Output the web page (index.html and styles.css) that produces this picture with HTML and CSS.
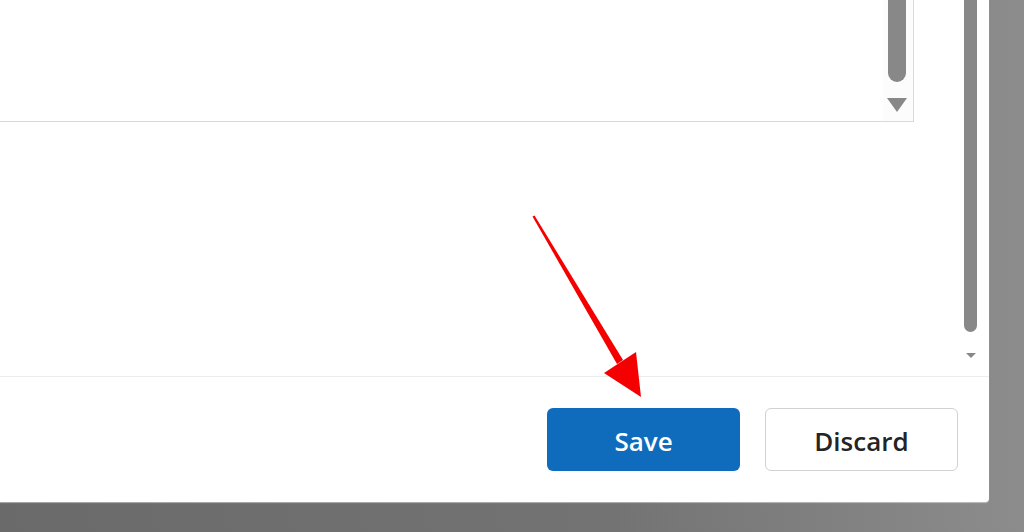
FILE: index.html
```html
<!DOCTYPE html>
<html>
<head>
<meta charset="utf-8">
<link rel="stylesheet" href="styles.css">
</head>
<body>
<div class="dialog">
  <div class="body">
    <div class="main">
      <div class="editor">
        <div class="editor-scroll">
          <div class="inner-thumb"></div>
          <div class="inner-arrow"></div>
        </div>
      </div>
    </div>
    <div class="outer-scroll">
      <div class="outer-thumb"></div>
      <div class="outer-arrow"></div>
    </div>
  </div>
  <div class="footer">
    <button class="btn primary">Save</button>
    <button class="btn secondary">Discard</button>
  </div>
</div>
<svg class="annot" width="1024" height="532" viewBox="0 0 1024 532">
  <polygon fill="#f40000" points="532.5,216.5 534.5,215.5 623,360 617,364"/>
  <polygon fill="#f40000" points="604,373 636,352 641,397"/>
</svg>
</body>
</html>
```
FILE: styles.css
```css
html, body {
  margin: 0;
  padding: 0;
}
body {
  width: 1024px;
  height: 532px;
  overflow: hidden;
  position: relative;
  background: linear-gradient(90deg, #6a6a6a 0%, #737373 60%, #868686 90%, #8c8c8c 100%);
  font-family: "Open Sans", "Noto Sans", sans-serif;
}
.dialog {
  width: 989px;
  height: 502px;
  background: #ffffff;
  border-bottom-right-radius: 4px;
  display: flex;
  flex-direction: column;
  box-shadow: 0 1px 1px rgba(255,255,255,0.45);
}
.body {
  height: 376px;
  display: flex;
}
.main {
  width: 964px;
}
.editor {
  width: 914px;
  height: 122px;
  border-right: 1px solid #d9d9d9;
  border-bottom: 1px solid #d9d9d9;
  box-sizing: border-box;
  display: flex;
  justify-content: flex-end;
}
.editor-scroll {
  width: 30px;
  background: #fcfcfc;
  display: flex;
  flex-direction: column;
  align-items: center;
  padding-right: 3px;
  box-sizing: border-box;
}
.inner-thumb {
  width: 18px;
  height: 82px;
  background: #888888;
  border-radius: 0 0 9px 9px;
}
.inner-arrow {
  margin-top: 16px;
  width: 0;
  height: 0;
  border-left: 10px solid transparent;
  border-right: 10px solid transparent;
  border-top: 14px solid #888888;
}
.outer-scroll {
  width: 25px;
  display: flex;
  flex-direction: column;
  padding-left: 1px;
}
.outer-thumb {
  width: 13px;
  height: 332px;
  background: #888888;
  border-radius: 0 0 7px 7px;
}
.outer-arrow {
  margin-top: 21px;
  margin-left: 2px;
  width: 0;
  height: 0;
  border-left: 5px solid transparent;
  border-right: 5px solid transparent;
  border-top: 5px solid #888888;
}
.footer {
  border-top: 1px solid #ececec;
  display: flex;
  justify-content: flex-end;
  gap: 25px;
  padding: 31px 31px 0 0;
}
.btn {
  width: 193px;
  height: 63px;
  border-radius: 6px;
  font-family: "Open Sans", "Noto Sans", sans-serif;
  font-size: 26px;
  font-weight: 600;
  padding: 3px 0 0 0;
  margin: 0;
  box-sizing: border-box;
  cursor: pointer;
}
.primary {
  background: #0f6cbd;
  color: #ffffff;
  border: none;
}
.secondary {
  background: #ffffff;
  color: #242424;
  border: 1px solid #d1d1d1;
}
.annot {
  position: absolute;
  left: 0;
  top: 0;
  pointer-events: none;
}
```
